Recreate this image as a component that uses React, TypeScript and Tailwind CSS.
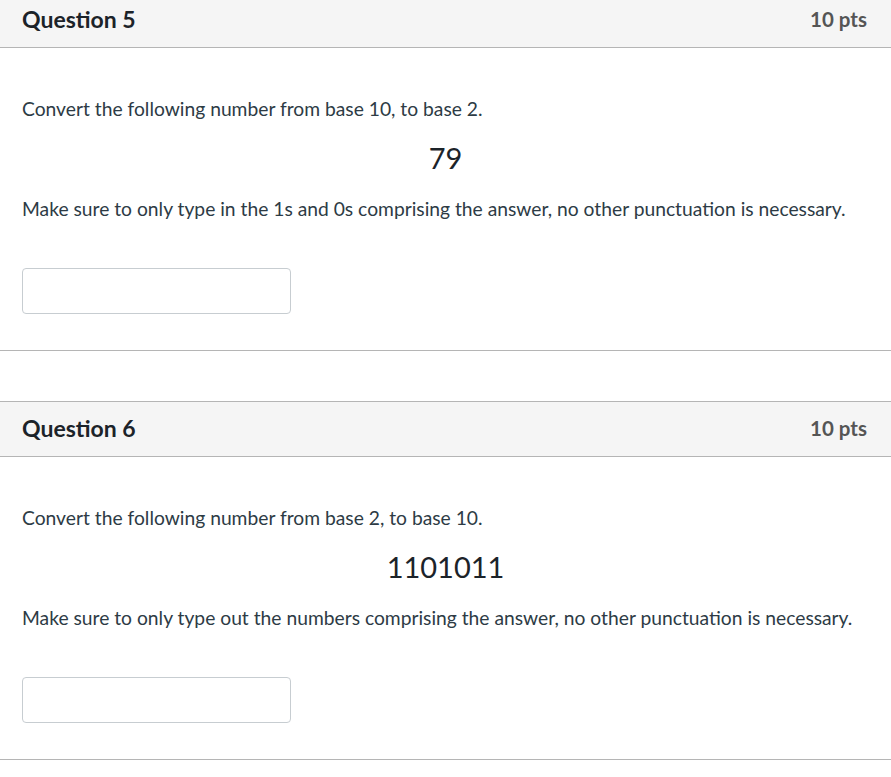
export default function App() {
  const questions = [
    {
      title: 'Question 5',
      intro: 'Convert the following number from base 10, to base 2.',
      value: '79',
      note: 'Make sure to only type in the 1s and 0s comprising the answer, no other punctuation is necessary.',
    },
    {
      title: 'Question 6',
      intro: 'Convert the following number from base 2, to base 10.',
      value: '1101011',
      note: 'Make sure to only type out the numbers comprising the answer, no other punctuation is necessary.',
    },
  ]

  return (
    <div
      className="min-h-screen bg-white text-[#2d3b45] overflow-hidden"
      style={{ fontFamily: 'Lato, "Noto Sans", sans-serif' }}
    >
      {questions.map((q, i) => (
        <div
          key={q.title}
          className={`border-y border-[#b5b5b5] ${i === 0 ? '-mt-[8px]' : 'mt-[50px]'}`}
        >
          {/* header */}
          <div className="h-[55px] bg-[#f5f5f5] border-b border-[#b5b5b5] flex items-center justify-between pl-[22px] pr-[24px] pb-[2px]">
            <h2 className="text-[23px] font-bold text-[#1c2329]">{q.title}</h2>
            <span className="text-[20.5px] font-bold text-[#555]">10 pts</span>
          </div>

          {/* body */}
          <div className="px-[22px] pt-[47px] pb-[36px]">
            <p className="text-[19.25px] leading-[27px]">{q.intro}</p>
            <p className="mt-[18px] text-center text-[29px] leading-[36px] text-[#1c2329]">
              {q.value}
            </p>
            <p className="mt-[19px] text-[19.25px] leading-[27px]">{q.note}</p>
            <input
              type="text"
              aria-label="answer"
              className="mt-[46px] block w-[269px] h-[46px] rounded-[4px] border border-[#c7cdd1] bg-white px-3 outline-none"
            />
          </div>
        </div>
      ))}
    </div>
  )
}
